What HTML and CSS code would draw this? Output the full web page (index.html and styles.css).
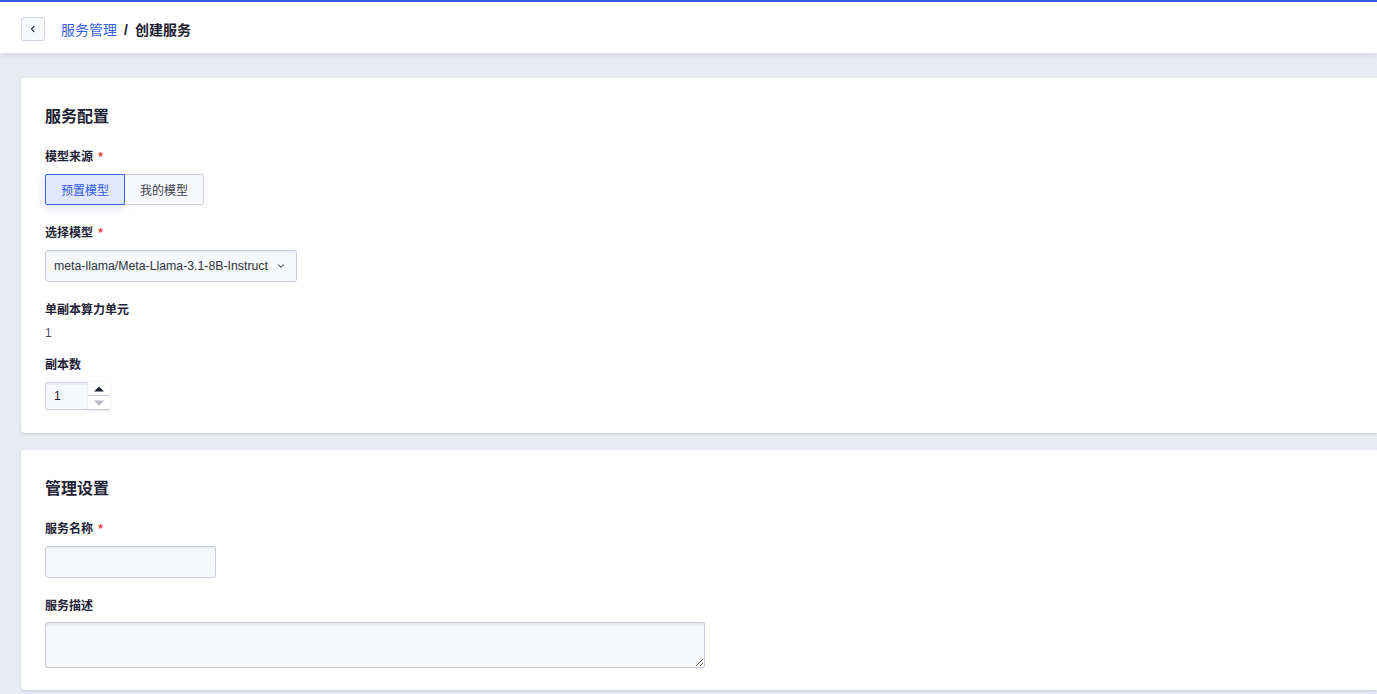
FILE: index.html
```html
<!DOCTYPE html>
<html lang="zh-CN">
<head>
<meta charset="utf-8">
<title>创建服务</title>
<link rel="stylesheet" href="styles.css">
</head>
<body>
<header class="topbar">
  <button class="back-btn" type="button" aria-label="返回">
    <svg width="8" height="8" viewBox="0 0 8 8"><path d="M5 1.5 L2.5 4 L5 6.5" fill="none" stroke="#2a2f45" stroke-width="1.2" stroke-linecap="round" stroke-linejoin="round"/></svg>
  </button>
  <nav class="crumbs">
    <a class="crumb-link">服务管理</a>
    <span class="crumb-sep">/</span>
    <span class="crumb-current">创建服务</span>
  </nav>
</header>

<main class="page">
  <section class="card card-config">
    <h2 class="card-title">服务配置</h2>

    <div class="field">
      <div class="label">模型来源 <span class="req">*</span></div>
      <div class="seg">
        <button class="seg-btn active" type="button">预置模型</button>
        <button class="seg-btn" type="button">我的模型</button>
      </div>
    </div>

    <div class="field">
      <div class="label">选择模型 <span class="req">*</span></div>
      <div class="select">
        <span class="select-text">meta-llama/Meta-Llama-3.1-8B-Instruct</span>
        <svg class="chev" width="8" height="6" viewBox="0 0 8 6"><path d="M1.5 1.8 L4 4.2 L6.5 1.8" fill="none" stroke="#555a6e" stroke-width="1.1" stroke-linecap="round" stroke-linejoin="round"/></svg>
      </div>
    </div>

    <div class="field">
      <div class="label">单副本算力单元</div>
      <div class="value">1</div>
    </div>

    <div class="field last">
      <div class="label">副本数</div>
      <div class="number">
        <div class="number-box">1</div>
        <div class="spinner">
          <span class="spin up"></span>
          <span class="spin down"></span>
        </div>
      </div>
    </div>
  </section>

  <section class="card card-manage">
    <h2 class="card-title">管理设置</h2>

    <div class="field">
      <div class="label">服务名称 <span class="req">*</span></div>
      <input class="text-input" type="text">
    </div>

    <div class="field last">
      <div class="label label-tight">服务描述</div>
      <textarea class="textarea"></textarea>
    </div>
  </section>
</main>
</body>
</html>
```

FILE: styles.css
```css
* { box-sizing: border-box; }

html, body {
  margin: 0;
  padding: 0;
}

body {
  background: #e9ebf3;
  font-family: "Liberation Sans", "Noto Sans CJK SC", sans-serif;
  color: #1d2133;
  height: 694px;
  overflow: hidden;
  border-top: 2px solid #2f5ae8;
}

.topbar {
  height: 51px;
  background: #ffffff;
  display: flex;
  align-items: center;
  padding-left: 21px;
  box-shadow: 0 2px 6px rgba(40, 50, 90, 0.12);
  position: relative;
  z-index: 1;
}

.back-btn {
  width: 24px;
  height: 24px;
  padding: 0;
  border: 1px solid #d3d6e2;
  border-radius: 3px;
  background: #f8f9fc;
  display: flex;
  align-items: center;
  justify-content: center;
  margin-top: 3px;
}

.crumbs {
  margin-left: 16px;
  display: flex;
  align-items: center;
  font-size: 14px;
  line-height: 20px;
  margin-top: 4px;
}

.crumb-link {
  color: #3461e6;
}

.crumb-sep {
  margin: 0 7px;
  font-weight: bold;
  color: #1d2133;
}

.crumb-current {
  font-weight: bold;
  color: #1d2133;
}

.page {
  padding: 25px 0 0 21px;
  display: flex;
  flex-direction: column;
  gap: 17px;
}

.card {
  background: #ffffff;
  border-radius: 4px 0 0 4px;
  box-shadow: 0 1px 3px rgba(40, 50, 90, 0.18);
  padding: 27px 24px 22px 24px;
}

.card-config {
  padding-bottom: 23px;
}

.card-title {
  margin: 0 0 18px 0;
  font-size: 16px;
  line-height: 24px;
  font-weight: bold;
  color: #1d2133;
}

.field {
  margin-bottom: 18px;
}

.field.last {
  margin-bottom: 0;
}

.label {
  font-size: 12px;
  line-height: 18px;
  font-weight: bold;
  color: #1d2133;
  padding-top: 1px;
  margin-bottom: 8px;
}

.label.label-tight {
  margin-bottom: 7px;
}

.req {
  color: #e5443b;
  margin-left: 2px;
}

.seg {
  display: flex;
}

.seg-btn {
  height: 31px;
  padding: 0;
  font-family: inherit;
  font-size: 12px;
  border: 1px solid #cfd2df;
  background: #f7f8fa;
  color: #3a3f52;
  width: 79px;
}

.seg-btn:first-child {
  border-radius: 2px 0 0 2px;
  width: 80px;
}

.seg-btn:last-child {
  border-left: none;
  border-radius: 0 2px 2px 0;
}

.seg-btn.active {
  background: #e1e8fd;
  border-color: #3b64ea;
  color: #2f5ae0;
  box-shadow: 0 3px 8px rgba(50, 70, 130, 0.16);
}

.select {
  width: 252px;
  height: 32px;
  border: 1px solid #c9ccd9;
  border-radius: 3px;
  background: #f7f8fa;
  display: flex;
  align-items: center;
  justify-content: space-between;
  padding: 0 11px 0 8px;
  box-shadow: inset 0 2px 0 #eceef3;
}

.select-text {
  font-size: 12.3px;
  color: #2d3142;
}

.chev {
  display: block;
}

.value {
  font-size: 12px;
  line-height: 18px;
  color: #4a4f62;
  margin-top: -3px;
  margin-bottom: -5px;
}

.number {
  display: flex;
  height: 28px;
  width: 65px;
}

.number-box {
  width: 43px;
  height: 28px;
  border: 1px solid #d0d3e0;
  border-right: none;
  border-radius: 2px 0 0 2px;
  background: #f7f8fa;
  box-shadow: inset 0 2px 0 #eceef3;
  font-size: 12px;
  line-height: 26px;
  padding-left: 8px;
  color: #1d2133;
}

.spinner {
  width: 22px;
  height: 28px;
  background: #ffffff;
  display: flex;
  flex-direction: column;
  box-shadow: 0 1px 3px rgba(40, 50, 90, 0.12);
}

.spin {
  flex: 1;
  position: relative;
  border-bottom: 1px solid #c3c9e6;
}

.spin::after {
  content: "";
  position: absolute;
  left: 50%;
  top: 50%;
  transform: translate(-50%, -50%);
  border-left: 5px solid transparent;
  border-right: 5px solid transparent;
}

.spin.up::after {
  border-bottom: 5px solid #1d2133;
}

.spin.down::after {
  border-top: 5px solid #b5b8c4;
}

.text-input {
  display: block;
  width: 171px;
  height: 32px;
  border: 1px solid #c9ccd9;
  border-radius: 3px;
  background: #f7f8fa;
  box-shadow: inset 0 2px 0 #eceef3;
  outline: none;
  margin: 0;
}

.textarea {
  display: block;
  width: 660px;
  height: 46px;
  border: 1px solid #c9ccdf;
  border-radius: 2px;
  background: #f7f8fa;
  box-shadow: inset 0 3px 0 #e9eaf0;
  outline: none;
  margin: 0;
  font-family: inherit;
}
```
